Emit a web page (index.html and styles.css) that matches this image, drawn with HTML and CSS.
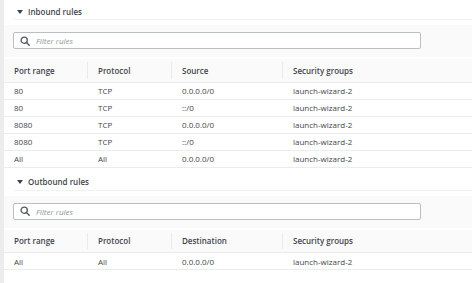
FILE: index.html
```html
<!DOCTYPE html>
<html lang="en">

<head>
    <meta charset="UTF-8">
    <meta name="viewport" content="width=device-width, initial-scale=1.0">
    <title>Security group rules</title>
    <link rel="stylesheet" href="styles.css">
</head>

<body>
    <div class="page">
        <!-- Inbound -->
        <div class="section-head">
            <span class="caret"></span>
            <h3>Inbound rules</h3>
        </div>
        <div class="filter-bar">
            <div class="filter-input">
                <svg class="search-icon" width="10" height="10" viewBox="0 0 10 10">
                    <circle cx="4.2" cy="4.2" r="3.1" fill="none" stroke="#545b64" stroke-width="1.3" />
                    <line x1="6.5" y1="6.5" x2="9.2" y2="9.2" stroke="#545b64" stroke-width="1.4" stroke-linecap="round" />
                </svg>
                <span class="placeholder">Filter rules</span>
            </div>
        </div>
        <table class="rules">
            <thead>
                <tr>
                    <th class="col-port">Port range</th>
                    <th class="col-proto">Protocol</th>
                    <th class="col-src">Source</th>
                    <th class="col-sg">Security groups</th>
                </tr>
            </thead>
            <tbody>
                <tr><td>80</td><td>TCP</td><td>0.0.0.0/0</td><td>launch-wizard-2</td></tr>
                <tr><td>80</td><td>TCP</td><td>::/0</td><td>launch-wizard-2</td></tr>
                <tr><td>8080</td><td>TCP</td><td>0.0.0.0/0</td><td>launch-wizard-2</td></tr>
                <tr><td>8080</td><td>TCP</td><td>::/0</td><td>launch-wizard-2</td></tr>
                <tr><td>All</td><td>All</td><td>0.0.0.0/0</td><td>launch-wizard-2</td></tr>
            </tbody>
        </table>

        <!-- Outbound -->
        <div class="section-head">
            <span class="caret"></span>
            <h3>Outbound rules</h3>
        </div>
        <div class="filter-bar">
            <div class="filter-input">
                <svg class="search-icon" width="10" height="10" viewBox="0 0 10 10">
                    <circle cx="4.2" cy="4.2" r="3.1" fill="none" stroke="#545b64" stroke-width="1.3" />
                    <line x1="6.5" y1="6.5" x2="9.2" y2="9.2" stroke="#545b64" stroke-width="1.4" stroke-linecap="round" />
                </svg>
                <span class="placeholder">Filter rules</span>
            </div>
        </div>
        <table class="rules">
            <thead>
                <tr>
                    <th class="col-port">Port range</th>
                    <th class="col-proto">Protocol</th>
                    <th class="col-src">Destination</th>
                    <th class="col-sg">Security groups</th>
                </tr>
            </thead>
            <tbody>
                <tr><td>All</td><td>All</td><td>0.0.0.0/0</td><td>launch-wizard-2</td></tr>
            </tbody>
        </table>
    </div>
</body>

</html>
```

FILE: styles.css
```css
* {
    margin: 0;
    padding: 0;
    box-sizing: border-box;
}

body {
    font-family: "Open Sans", "Liberation Sans", Arial, sans-serif;
    font-size: 8px;
    color: #3f454c;
    background: #fff;
    overflow: hidden;
}

.page {
    width: 472px;
    margin-top: -3px;
    border-left: 4px solid #ececec;
    min-height: 300px;
}

.section-head {
    display: flex;
    align-items: center;
    height: 23px;
    padding: 10px 0 3px 4px;
    margin-left: 9px;
    border-bottom: 1px solid #f1f2f2;
}

.section-head h3 {
    font-size: 8px;
    font-weight: 600;
    color: #3f454c;
    line-height: 10px;
    margin-left: 5px;
}

.caret {
    width: 0;
    height: 0;
    border-left: 3px solid transparent;
    border-right: 3px solid transparent;
    border-top: 4px solid #3d4249;
}

.filter-bar {
    height: 32px;
    margin-top: 5px;
    margin-bottom: 2px;
    padding: 7px 0 0 9px;
    background: #fafafa;
}

.filter-input {
    display: flex;
    align-items: center;
    width: 408px;
    height: 17px;
    padding-left: 6px;
    background: #fff;
    border: 1px solid #b9c0c1;
    border-radius: 2px;
}

.search-icon {
    margin-right: 6px;
}

.placeholder {
    font-style: italic;
    color: #8d9899;
}

.rules {
    width: 468px;
    border-collapse: collapse;
    table-layout: fixed;
}

.rules th,
.rules td {
    text-align: left;
    padding: 0 0 0 10px;
    white-space: nowrap;
}

.rules th {
    position: relative;
    height: 23px;
    font-weight: 600;
    background: #fafafa;
    border-bottom: 1px solid #eaeded;
}

.rules th + th::before {
    content: "";
    position: absolute;
    left: 0;
    top: 3px;
    bottom: 3px;
    border-left: 1px solid #e9ebeb;
}

.rules td {
    height: 17px;
    border-bottom: 1px solid #eaeded;
}

.rules td + td,
.rules th + th {
    padding-left: 11px;
}

.col-port {
    width: 83px;
}

.col-proto {
    width: 84px;
}

.col-src {
    width: 111px;
}
```
